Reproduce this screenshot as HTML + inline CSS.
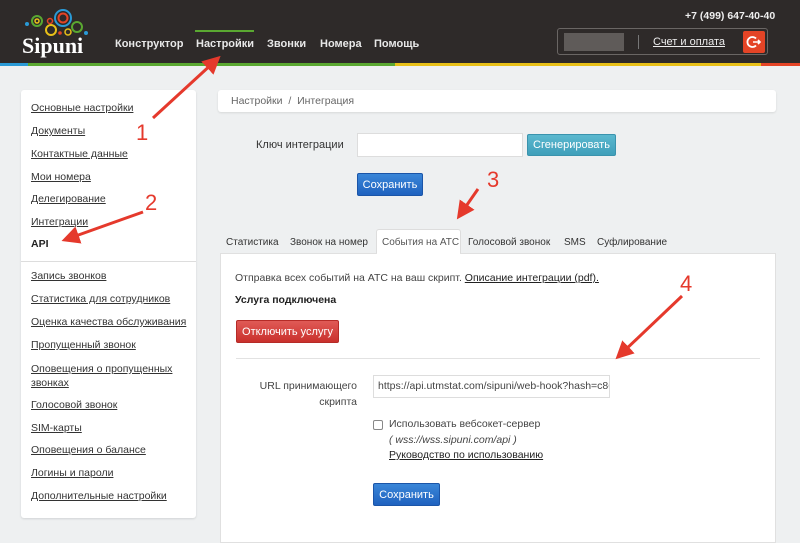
<!DOCTYPE html>
<html><head><meta charset="utf-8">
<style>
*{margin:0;padding:0;box-sizing:border-box}
body{width:800px;height:533px;overflow:hidden;background:#eef0f1;font-family:"Liberation Sans",sans-serif;font-size:11px;color:#333;position:relative}
.a{position:absolute}
.hdr{left:0;top:0;width:800px;height:63px;background:#2e2a29}
.nav{top:38px;color:#e8e8e8;font-weight:bold;font-size:11px}
.side{left:21px;top:90px;width:175px;height:428px;background:#fff;border-radius:3px;box-shadow:0 1px 2px rgba(0,0,0,.12)}
.side a{position:absolute;left:10px;color:#333;text-decoration:underline;font-size:10.5px;white-space:nowrap}
.btn{position:absolute;color:#fff;font-size:11px;display:flex;align-items:center;justify-content:center;border-radius:2px}
.blue{background:linear-gradient(#3a86d8,#1f62bf);border:1px solid #1b55a8}
.tab{position:absolute;top:237px;font-size:10px;color:#333}
</style></head><body>
<div class="a hdr"></div>
<div class="a" style="left:0;top:63px;width:28px;height:3px;background:#2a9ad6"></div>
<div class="a" style="left:28px;top:63px;width:367px;height:3px;background:#5aa831"></div>
<div class="a" style="left:395px;top:63px;width:366px;height:3px;background:#e8c018"></div>
<div class="a" style="left:761px;top:63px;width:39px;height:3px;background:#e44426"></div>
<svg class="a" style="left:20px;top:8px" width="75" height="50">
<circle cx="43" cy="10" r="8" fill="none" stroke="#2a9ad6" stroke-width="2"/>
<circle cx="43" cy="10" r="4.5" fill="none" stroke="#e44426" stroke-width="2"/>
<circle cx="17" cy="13" r="5" fill="none" stroke="#5aa831" stroke-width="2"/>
<circle cx="17" cy="13" r="2" fill="none" stroke="#e8c018" stroke-width="1.5"/>
<circle cx="30" cy="13" r="2.5" fill="none" stroke="#e44426" stroke-width="1.5"/>
<circle cx="7" cy="16" r="2" fill="#2a9ad6"/>
<circle cx="31" cy="22" r="5" fill="none" stroke="#e8c018" stroke-width="2"/>
<circle cx="48" cy="24" r="3" fill="none" stroke="#e8c018" stroke-width="1.5"/>
<circle cx="57" cy="19" r="5" fill="none" stroke="#5aa831" stroke-width="2"/>
<circle cx="66" cy="25" r="2" fill="#2a9ad6"/>
<circle cx="40" cy="25" r="1.8" fill="#e44426"/>
<text x="2" y="45" font-family="Liberation Serif" font-weight="bold" font-size="22" fill="#fff">Sipuni</text>
</svg>
<div class="a nav" style="left:115px">Конструктор</div>
<div class="a nav" style="left:196px">Настройки</div>
<div class="a" style="left:195px;top:30px;width:59px;height:2px;background:#5aa831"></div>
<div class="a nav" style="left:267px">Звонки</div>
<div class="a nav" style="left:320px">Номера</div>
<div class="a nav" style="left:374px">Помощь</div>
<div class="a" style="left:685px;top:10px;color:#eee;font-size:10.5px;font-weight:bold">+7 (499) 647-40-40</div>
<div class="a" style="left:557px;top:28px;width:211px;height:27px;border:1px solid #6a6664;border-radius:3px"></div>
<div class="a" style="left:564px;top:33px;width:60px;height:18px;background:#5f5b59"></div>
<div class="a" style="left:638px;top:35px;width:1px;height:14px;background:#777"></div>
<div class="a" style="left:653px;top:36px;color:#eee;font-size:11px;text-decoration:underline">Счет и оплата</div>
<div class="a" style="left:743px;top:31px;width:22px;height:22px;background:#e44426;border-radius:2px"></div>
<svg class="a" style="left:743px;top:31px" width="22" height="22"><path d="M13 7.5 A5 5 0 1 0 13 14.5" fill="none" stroke="#fff" stroke-width="1.8"/><path d="M10 11 H17 M15 9 L17 11 L15 13" fill="none" stroke="#fff" stroke-width="1.6"/></svg>

<div class="a side">
<a style="top:12px">Основные настройки</a>
<a style="top:35px">Документы</a>
<a style="top:58px">Контактные данные</a>
<a style="top:81px">Мои номера</a>
<a style="top:103px">Делегирование</a>
<a style="top:126px">Интеграции</a>
<a style="top:148px;text-decoration:none;font-weight:bold;color:#222">API</a>
<div class="a" style="left:0;top:171px;width:175px;height:1px;background:#ddd"></div>
<a style="top:180px">Запись звонков</a>
<a style="top:203px">Статистика для сотрудников</a>
<a style="top:226px">Оценка качества обслуживания</a>
<a style="top:249px">Пропущенный звонок</a>
<a style="top:272px;line-height:14px">Оповещения о пропущенных<br>звонках</a>
<a style="top:309px">Голосовой звонок</a>
<a style="top:332px">SIM-карты</a>
<a style="top:354px">Оповещения о балансе</a>
<a style="top:377px">Логины и пароли</a>
<a style="top:400px">Дополнительные настройки</a>
</div>

<div class="a" style="left:218px;top:90px;width:558px;height:22px;background:#fff;border-radius:3px;box-shadow:0 1px 2px rgba(0,0,0,.1);color:#666;font-size:10.5px;padding:5px 13px">Настройки &nbsp;/&nbsp; Интеграция</div>
<div class="a" style="left:256px;top:139px;font-size:11px">Ключ интеграции</div>
<div class="a" style="left:357px;top:133px;width:166px;height:24px;background:#fff;border:1px solid #ddd"></div>
<div class="btn" style="left:527px;top:134px;width:89px;height:22px;background:linear-gradient(#5bb8cf,#3f9fba);border:1px solid #3a93ad">Сгенерировать</div>
<div class="btn blue" style="left:357px;top:173px;width:66px;height:23px">Сохранить</div>

<div class="a" style="left:376px;top:229px;width:85px;height:25px;background:#fff;border:1px solid #ddd;border-bottom:none;border-radius:3px 3px 0 0"></div>
<div class="tab" style="left:226px">Статистика</div>
<div class="tab" style="left:290px">Звонок на номер</div>
<div class="tab" style="left:382px;color:#555">События на АТС</div>
<div class="tab" style="left:468px">Голосовой звонок</div>
<div class="tab" style="left:564px">SMS</div>
<div class="tab" style="left:597px">Суфлирование</div>
<div class="a" style="left:220px;top:253px;width:556px;height:290px;background:#fff;border:1px solid #e0e0e0"></div>
<div class="a" style="left:377px;top:252px;width:83px;height:3px;background:#fff"></div>
<div class="a" style="left:235px;top:272px;color:#444;font-size:10.5px">Отправка всех событий на АТС на ваш скрипт. <u style="color:#222">Описание интеграции (pdf).</u></div>
<div class="a" style="left:235px;top:294px;font-weight:bold;font-size:10.5px;color:#222">Услуга подключена</div>
<div class="btn" style="left:236px;top:320px;width:103px;height:23px;background:linear-gradient(#e05a56,#c9302c);border:1px solid #b52b27">Отключить услугу</div>
<div class="a" style="left:236px;top:358px;width:524px;height:1px;background:#e2e2e2"></div>
<div class="a" style="left:240px;top:378px;width:117px;text-align:right;color:#444;font-size:10.5px;line-height:16px">URL принимающего<br>скрипта</div>
<div class="a" style="left:373px;top:375px;width:237px;height:23px;border:1px solid #ddd;font-size:10.5px;color:#444;padding:4px 4px;white-space:nowrap;overflow:hidden">https://api.utmstat.com/sipuni/web-hook?hash=c86</div>
<div class="a" style="left:373px;top:420px;width:10px;height:10px;border:1px solid #888;border-radius:2px"></div>
<div class="a" style="left:389px;top:418px;color:#444;font-size:10.5px">Использовать вебсокет-сервер</div>
<div class="a" style="left:389px;top:434px;color:#444;font-size:10.5px;font-style:italic">( wss://wss.sipuni.com/api )</div>
<div class="a" style="left:389px;top:449px;color:#222;font-size:10.5px;text-decoration:underline">Руководство по использованию</div>
<div class="btn blue" style="left:373px;top:483px;width:67px;height:23px">Сохранить</div>

<svg class="a" style="left:0;top:0" width="800" height="533">
<defs><marker id="m" markerWidth="6" markerHeight="6" refX="3" refY="3" orient="auto"><path d="M0,0 L6,3 L0,6 z" fill="#e5392c"/></marker></defs>
<g stroke="#e5392c" stroke-width="3" fill="none" marker-end="url(#m)">
<line x1="153" y1="118" x2="214" y2="62"/>
<line x1="143" y1="212" x2="70" y2="238"/>
<line x1="478" y1="189" x2="462" y2="212"/>
<line x1="682" y1="296" x2="622" y2="353"/>
</g>
<g fill="#e5392c" font-family="Liberation Sans" font-size="22">
<text x="136" y="140">1</text><text x="145" y="210">2</text><text x="487" y="187">3</text><text x="680" y="291">4</text>
</g>
</svg>
</body></html>
